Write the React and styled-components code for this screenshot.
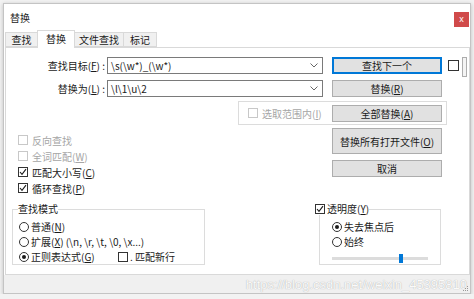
import React from 'react'
import styled, { createGlobalStyle } from 'styled-components'

const Global = createGlobalStyle`
  html, body { margin:0; padding:0; }
  body {
    background:#f2f2f2;
    font-family:"Noto Sans CJK SC","Microsoft YaHei",sans-serif;
    font-size:10px;
    color:#1a1a1a;
  }
`

const Page = styled.div`
  padding:3px 0 0 3px;
`
const Window = styled.div`
  width:468px;
  height:291px;
  box-sizing:border-box;
  background:#fff;
  border:1px solid #c4c4c4;
  box-shadow:0 1px 4px rgba(0,0,0,.22);
  display:flex;
  flex-direction:column;
`
const TitleBar = styled.div`
  height:26px;
  display:flex;
  align-items:center;
  padding-left:6px;
  flex-shrink:0;
`
const Title = styled.span`
  font-size:10px;
  color:#222;
`
const Close = styled.div`
  margin-left:auto;
  margin-right:1px;
  align-self:flex-start;
  margin-top:8px;
  width:15px;
  height:15px;
  background:#d04a4a;
  color:#fff;
  font-family:"Liberation Sans",sans-serif;
  font-size:9px;
  line-height:14px;
  text-align:center;
`
const TabRow = styled.div`
  height:17px;
  display:flex;
  align-items:flex-end;
  padding-left:1px;
  flex-shrink:0;
`
const Tab = styled.div`
  width:${p => p.w}px;
  height:${p => (p.active ? 18 : 15)}px;
  margin-left:-1px;
  margin-bottom:${p => (p.active ? -1 : 0)}px;
  box-sizing:border-box;
  border:1px solid #d9d9d9;
  border-bottom:${p => (p.active ? 'none' : '1px solid #d9d9d9')};
  background:${p => (p.active ? '#fff' : '#f0f0f0')};
  position:relative;
  z-index:${p => (p.active ? 2 : 1)};
  font-size:10px;
  line-height:${p => (p.active ? 15 : 14)}px;
  text-align:center;
  &:first-child{ margin-left:0; }
`
const Panel = styled.div`
  height:228px;
  margin-left:1px;
  box-sizing:border-box;
  border:1px solid #d9d9d9;
  background:#fff;
  flex-shrink:0;
`
const Row = styled.div`
  display:flex;
  align-items:center;
  height:${p => p.h || 17}px;
  margin-top:${p => p.mt || 0}px;
`
const FieldLabel = styled.label`
  width:99px;
  text-align:right;
  white-space:nowrap;
`
const Combo = styled.div`
  margin-left:2px;
  width:216px;
  height:17px;
  box-sizing:border-box;
  border:1px solid #7a7a7a;
  display:flex;
  align-items:center;
  padding:0 0 0 3px;
  font-size:10px;
  white-space:nowrap;
  span{ flex:1; }
  svg{ margin-right:4px; }
`
const Btn = styled.button`
  margin-left:${p => p.ml || 0}px;
  width:110px;
  height:${p => p.h || 17}px;
  box-sizing:border-box;
  padding:0;
  background:#e1e1e1;
  border:1px solid ${p => (p.focus ? '#0078d7' : '#adadad')};
  box-shadow:${p => (p.focus ? 'inset 0 0 0 1px #0078d7' : 'none')};
  font-family:inherit;
  font-size:10px;
  color:#1a1a1a;
  white-space:nowrap;
`
const MiniCheck = styled.span`
  margin-left:6px;
  width:11px;
  height:11px;
  box-sizing:border-box;
  border:1px solid #333;
`
const SlimBar = styled.span`
  margin-left:3px;
  margin-top:3px;
  width:5px;
  height:20px;
  box-sizing:border-box;
  border:1px solid #adadad;
  background:#f4f4f4;
`
const ScopeBox = styled.div`
  margin-top:4px;
  margin-left:232px;
  width:209px;
  height:24px;
  box-sizing:border-box;
  border:1px solid #dcdcdc;
  display:flex;
  align-items:center;
  padding-left:9px;
  ${Btn}{ margin-left:auto; margin-right:4px; }
`
const Middle = styled.div`
  display:flex;
  align-items:flex-start;
`
const Options = styled.div`
  width:326px;
  box-sizing:border-box;
  padding:7px 0 0 12px;
`
const Option = styled.div`
  height:16px;
  display:flex;
  align-items:center;
  color:${p => (p.disabled ? '#a6a6a6' : '#1a1a1a')};
`
const ButtonColumn = styled.div`
  padding-top:3px;
  display:flex;
  flex-direction:column;
  gap:6px;
`
const Box = styled.span`
  width:10px;
  height:10px;
  flex-shrink:0;
  box-sizing:border-box;
  border:1px solid ${p => (p.disabled ? '#c8c8c8' : '#333')};
  margin-right:${p => (p.gap ?? 4)}px;
  display:flex;
  align-items:center;
  justify-content:center;
`
const Circle = styled.span`
  width:10px;
  height:10px;
  flex-shrink:0;
  box-sizing:border-box;
  border:1px solid #333;
  border-radius:50%;
  margin-right:2px;
  display:flex;
  align-items:center;
  justify-content:center;
  &::after{
    content:'';
    width:4px;
    height:4px;
    border-radius:50%;
    background:${p => (p.checked ? '#1a1a1a' : 'transparent')};
  }
`
const Bottom = styled.div`
  display:flex;
  margin-top:7px;
`
const Group = styled.fieldset`
  margin:0 0 0 ${p => p.ml}px;
  width:${p => p.w}px;
  box-sizing:border-box;
  border:1px solid #dcdcdc;
  padding:4px 0 0 ${p => p.pl}px;
  min-width:0;
  legend{
    padding:0;
    margin-left:${p => p.lm}px;
    font-size:10px;
    line-height:12px;
    display:flex;
    align-items:center;
  }
`
const RadioRow = styled.div`
  height:15px;
  display:flex;
  align-items:center;
  white-space:nowrap;
`
const RadioItem = styled.span`
  display:flex;
  align-items:center;
  width:${p => (p.w ? p.w + 'px' : 'auto')};
`
const Track = styled.div`
  position:relative;
  margin-top:3px;
  width:96px;
  height:3px;
  background:#dcdcdc;
`
const Thumb = styled.span`
  position:absolute;
  top:-3px;
  width:4px;
  height:9px;
  background:#0078d7;
`
const Status = styled.div`
  flex:1;
  background:#f0f0f0;
  position:relative;
  display:flex;
  align-items:center;
  justify-content:flex-end;
  padding-right:3px;
`
const Watermark = styled.span`
  font-family:"Liberation Sans",Arial,sans-serif;
  font-size:13px;
  color:#fafafa;
  text-shadow:0 0 1px rgba(0,0,0,.35);
  white-space:nowrap;
`
const Grip = styled.svg`
  position:absolute;
  right:1px;
  bottom:1px;
`

const Check = () => (
  <svg width="8" height="8" viewBox="0 0 8 8">
    <polyline points="1,4 3,6.3 7,1.2" fill="none" stroke="#1a1a1a" strokeWidth="1.1" />
  </svg>
)

const Chevron = () => (
  <svg width="8" height="5" viewBox="0 0 8 5">
    <polyline points="0.5,0.5 4,4 7.5,0.5" fill="none" stroke="#666" strokeWidth="1" />
  </svg>
)

const CheckBox = ({ checked, disabled, gap, children }) => (
  <>
    <Box disabled={disabled} gap={gap}>{checked && <Check />}</Box>
    {children}
  </>
)

export default function App() {
  return (
    <Page>
      <Global />
      <Window>
        <TitleBar>
          <Title>替换</Title>
          <Close>x</Close>
        </TitleBar>
        <TabRow>
          <Tab w={33}>查找</Tab>
          <Tab w={38} active>替换</Tab>
          <Tab w={50}>文件查找</Tab>
          <Tab w={34}>标记</Tab>
        </TabRow>
        <Panel>
          <Row mt={9}>
            <FieldLabel>查找目标(<u>F</u>) :</FieldLabel>
            <Combo><span>\s(\w*)_(\w*)</span><Chevron /></Combo>
            <Btn ml={9} focus>查找下一个</Btn>
            <MiniCheck />
            <SlimBar />
          </Row>
          <Row mt={6}>
            <FieldLabel>替换为(<u>L</u>) :</FieldLabel>
            <Combo><span>\l\1\u\2</span><Chevron /></Combo>
            <Btn ml={9}>替换(<u>R</u>)</Btn>
          </Row>
          <ScopeBox>
            <Option disabled>
              <CheckBox disabled>选取范围内(<u>I</u>)</CheckBox>
            </Option>
            <Btn>全部替换(<u>A</u>)</Btn>
          </ScopeBox>
          <Middle>
            <Options>
              <Option disabled><CheckBox disabled>反向查找</CheckBox></Option>
              <Option disabled><CheckBox disabled>全词匹配(<u>W</u>)</CheckBox></Option>
              <Option><CheckBox checked>匹配大小写(<u>C</u>)</CheckBox></Option>
              <Option><CheckBox checked>循环查找(<u>P</u>)</CheckBox></Option>
            </Options>
            <ButtonColumn>
              <Btn h={26}>替换所有打开文件(<u>O</u>)</Btn>
              <Btn>取消</Btn>
            </ButtonColumn>
          </Middle>
          <Bottom>
            <Group ml={6} w={193} pl={6} lm={-1}>
              <legend>查找模式</legend>
              <RadioRow><RadioItem><Circle />普通(<u>N</u>)</RadioItem></RadioRow>
              <RadioRow><RadioItem><Circle />扩展(<u>X</u>) (\n, \r, \t, \0, \x...)</RadioItem></RadioRow>
              <RadioRow>
                <RadioItem w={99}><Circle checked />正则表达式(<u>G</u>)</RadioItem>
                <CheckBox gap={2}>. 匹配新行</CheckBox>
              </RadioRow>
            </Group>
            <Group ml={114} w={122} pl={12} lm={-17}>
              <legend><CheckBox checked gap={2}>透明度(<u>Y</u>)</CheckBox></legend>
              <RadioRow><RadioItem><Circle checked />失去焦点后</RadioItem></RadioRow>
              <RadioRow><RadioItem><Circle />始终</RadioItem></RadioRow>
              <RadioRow>
                <Track><Thumb style={{ left: 67 }} /></Track>
              </RadioRow>
            </Group>
          </Bottom>
        </Panel>
        <Status>
          <Watermark>https://blog.csdn.net/weixin_45395810</Watermark>
          <Grip width="7" height="7" viewBox="0 0 7 7">
            <rect x="5" y="1" width="1" height="1" fill="#999" />
            <rect x="3" y="3" width="1" height="1" fill="#999" />
            <rect x="5" y="3" width="1" height="1" fill="#999" />
            <rect x="1" y="5" width="1" height="1" fill="#999" />
            <rect x="3" y="5" width="1" height="1" fill="#999" />
            <rect x="5" y="5" width="1" height="1" fill="#999" />
          </Grip>
        </Status>
      </Window>
    </Page>
  )
}
